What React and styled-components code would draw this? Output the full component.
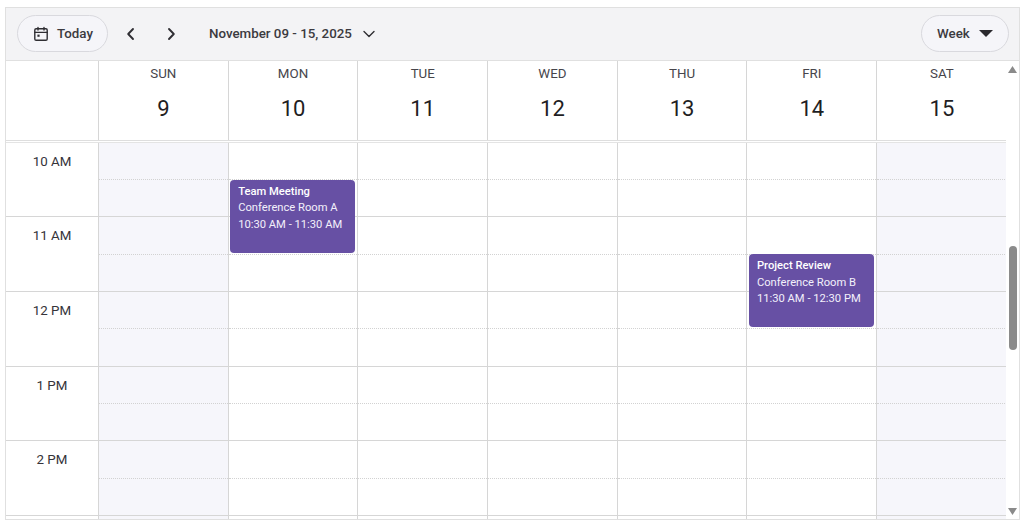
import React from "react";
import styled, { createGlobalStyle } from "styled-components";

const Global = createGlobalStyle`
  html, body { margin: 0; padding: 0; background: #fff; overflow: hidden; }
  body { font-family: Roboto, "Liberation Sans", sans-serif; color: #1c1b1f; }
`;

const Frame = styled.div`
  box-sizing: border-box;
  width: 1015px;
  height: 513px;
  margin: 7px 0 0 5px;
  border: 1px solid #e0e0e0;
  display: flex;
  flex-direction: column;
  overflow: hidden;
`;

const Toolbar = styled.div`
  box-sizing: border-box;
  height: 53px;
  flex: none;
  background: #f3f3f5;
  border-bottom: 1px solid #e0e0e0;
  display: flex;
  align-items: center;
  padding: 0 10px 1px 11px;
`;

const Pill = styled.div`
  box-sizing: border-box;
  height: 37px;
  border: 1px solid #d9d9de;
  border-radius: 19px;
  background: #f5f5f9;
  display: flex;
  align-items: center;
  font-size: 13.33px;
  font-weight: 500;
  color: #3b3a40;
`;

const TodayPill = styled(Pill)`
  width: 91px;
  padding-left: 15px;
  gap: 8px;
`;

const WeekPill = styled(Pill)`
  width: 88px;
  padding-left: 15px;
  gap: 9px;
  margin-left: auto;
`;

const NavIcon = styled.svg`
  width: 16px;
  height: 16px;
  flex: none;
  fill: none;
  stroke: #2f2e33;
  stroke-width: 1.9;
  stroke-linecap: round;
  stroke-linejoin: round;
`;

const NavGroup = styled.div`
  display: flex;
  align-items: center;
  gap: 24px;
  margin-left: 15px;
`;

const DateRange = styled.div`
  display: flex;
  align-items: center;
  margin-left: 30px;
  gap: 9px;
  font-size: 13.33px;
  font-weight: 500;
  color: #3b3a40;
`;

const Main = styled.div`
  flex: 1;
  min-height: 0;
  display: flex;
`;

const Content = styled.div`
  width: 1000px;
  flex: none;
  display: flex;
  flex-direction: column;
  overflow: hidden;
`;

const HeaderRow = styled.div`
  flex: none;
  display: grid;
  grid-template-columns: 93px repeat(7, 129.7px);
  height: 78.6px;
  border-bottom: 1px solid #dedede;
`;

const Corner = styled.div`
  border-right: 1px solid #d6d6d6;
`;

const DayHead = styled.div`
  box-sizing: border-box;
  border-right: 1px solid #d6d6d6;
  display: flex;
  flex-direction: column;
  align-items: center;
  padding-top: 6px;
  &:last-child { border-right: none; }
`;

const DayName = styled.div`
  font-size: 13.33px;
  line-height: 14px;
  color: #46454b;
`;

const DayNum = styled.div`
  font-size: 22px;
  line-height: 26px;
  margin-top: 15px;
  color: #1f1e23;
`;

const Gap = styled.div`
  flex: none;
  height: 1px;
  background: #fff;
  border-bottom: 1px solid #e4e4e4;
`;

const Grid = styled.div`
  flex: 1;
  min-height: 0;
  display: grid;
  grid-template-columns: 93px repeat(7, 129.7px);
  overflow: hidden;
`;

const TimeCol = styled.div`
  border-right: 1px solid #d6d6d6;
`;

const TimeCell = styled.div`
  box-sizing: border-box;
  height: 74.7px;
  border-bottom: 1px solid #d6d6d6;
  text-align: center;
  font-size: 13.33px;
  line-height: 16px;
  padding-top: 11px;
  color: #35343a;
`;

const DayCol = styled.div`
  position: relative;
  box-sizing: border-box;
  border-right: 1px solid #d6d6d6;
  background: ${(p) => (p.$weekend ? "#f6f6fb" : "#fff")};
  &:last-child { border-right: none; }
`;

const Slot = styled.div`
  box-sizing: border-box;
  height: 74.7px;
  display: flex;
  flex-direction: column;
  border-bottom: 1px solid #d6d6d6;
`;

const HalfSlot = styled.div`
  box-sizing: border-box;
  height: 37.3px;
  flex: none;
  border-bottom: 1px dotted #d2d2d2;
`;

const Event = styled.div`
  position: absolute;
  box-sizing: border-box;
  left: 1.5px;
  top: ${(p) => p.$top}px;
  width: 125px;
  height: 73px;
  background: #6750a4;
  border-radius: 4px;
  padding: 4px 8px;
  color: #f3f0fb;
  font-size: 11.2px;
  line-height: 16.6px;
  white-space: nowrap;
`;

const EventTitle = styled.div`
  font-weight: 500;
  color: #fff;
`;

const Scrollbar = styled.div`
  flex: 1;
  position: relative;
  background: #fff;
  display: flex;
  flex-direction: column;
  align-items: center;
`;

const Arrow = styled.svg`
  position: absolute;
  left: 2px;
  width: 9px;
  height: 7px;
  fill: #8a8a8a;
  top: ${(p) => p.$top}px;
`;

const Thumb = styled.div`
  width: 8px;
  height: 104px;
  margin: 185px 0 0 0;
  background: #8b8b8b;
  border-radius: 4px;
`;

const days = [
  ["SUN", 9],
  ["MON", 10],
  ["TUE", 11],
  ["WED", 12],
  ["THU", 13],
  ["FRI", 14],
  ["SAT", 15],
];
const hours = ["10 AM", "11 AM", "12 PM", "1 PM", "2 PM"];

const events = {
  MON: { top: 37, title: "Team Meeting", room: "Conference Room A", time: "10:30 AM - 11:30 AM" },
  FRI: { top: 111.7, title: "Project Review", room: "Conference Room B", time: "11:30 AM - 12:30 PM" },
};

export default function App() {
  return (
    <>
      <Global />
      <Frame>
        <Toolbar>
          <TodayPill>
            <NavIcon viewBox="0 0 16 16" style={{ strokeWidth: 1.4 }}>
              <rect x="1.8" y="2.8" width="12.4" height="11.4" rx="1.3" />
              <path d="M1.8 6.4h12.4M5 1.4v2.6M11 1.4v2.6" />
              <path d="M4.4 8.6h2.2v2.2H4.4z" fill="#2f2e33" stroke="none" />
            </NavIcon>
            Today
          </TodayPill>
          <NavGroup>
            <NavIcon viewBox="0 0 16 16"><path d="M10 3 5.2 8l4.8 5" /></NavIcon>
            <NavIcon viewBox="0 0 16 16"><path d="M6 3l4.8 5L6 13" /></NavIcon>
          </NavGroup>
          <DateRange>
            November 09 - 15, 2025
            <NavIcon viewBox="0 0 16 16" style={{ strokeWidth: 1.4 }}><path d="M3 5.5l5 5 5-5" /></NavIcon>
          </DateRange>
          <WeekPill>
            Week
            <svg width="14" height="7" viewBox="0 0 14 7"><path d="M0 0h14L7 7z" fill="#2a292e" /></svg>
          </WeekPill>
        </Toolbar>
        <Main>
          <Content>
            <HeaderRow>
              <Corner />
              {days.map(([n, d]) => (
                <DayHead key={n}>
                  <DayName>{n}</DayName>
                  <DayNum>{d}</DayNum>
                </DayHead>
              ))}
            </HeaderRow>
            <Gap />
            <Grid>
              <TimeCol>
                {hours.map((h) => (
                  <TimeCell key={h}>{h}</TimeCell>
                ))}
              </TimeCol>
              {days.map(([n]) => {
                const ev = events[n];
                return (
                  <DayCol key={n} $weekend={n === "SUN" || n === "SAT"}>
                    {hours.map((h) => (
                      <Slot key={h}>
                        <HalfSlot />
                      </Slot>
                    ))}
                    {ev && (
                      <Event $top={ev.top}>
                        <EventTitle>{ev.title}</EventTitle>
                        <div>{ev.room}</div>
                        <div>{ev.time}</div>
                      </Event>
                    )}
                  </DayCol>
                );
              })}
            </Grid>
          </Content>
          <Scrollbar>
            <Arrow $top={5} viewBox="0 0 9 7"><path d="M4.5 0 9 7H0z" /></Arrow>
            <Thumb />
            <Arrow $top={447} viewBox="0 0 9 7"><path d="M0 0h9L4.5 7z" /></Arrow>
          </Scrollbar>
        </Main>
      </Frame>
    </>
  );
}
